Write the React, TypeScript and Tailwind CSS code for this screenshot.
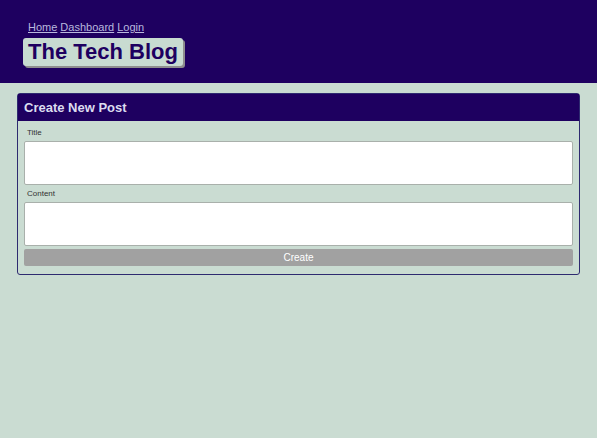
export default function App() {
  return (
    <div className="min-h-[438px] bg-[#cadcd2] font-['Liberation_Sans',Arial,sans-serif]">
      <header className="h-[83px] bg-[#1e0060] pl-[23px] pt-[20px]">
        <nav className="flex gap-[3px] pl-[5px] text-[11px] leading-[14px] text-[#b9b9de]">
          <a href="#" className="underline">Home</a>
          <a href="#" className="underline">Dashboard</a>
          <a href="#" className="underline">Login</a>
        </nav>
        <h1 className="mt-[4px] inline-block rounded-[3px] bg-[#c8dbd1] px-[5px] py-[1px] text-[22px] font-bold leading-[26px] text-[#1e0060] shadow-[2px_2px_0_#8e8e8e]">
          The Tech Blog
        </h1>
      </header>
      <main className="px-[17px] pt-[10px]">
        <section className="rounded-[3px] border border-[#2e2a70] bg-[#cadcd2]">
          <h2 className="flex h-[27px] items-center bg-[#1e0060] px-[6px] text-[13px] font-bold text-[#dcdcef]">
            Create New Post
          </h2>
          <form className="flex flex-col px-[6px] pb-[8px] pt-[6px]">
            <label className="pl-[3px] text-[8px] leading-[12px] text-[#333]">Title</label>
            <input className="mt-[2px] h-[44px] w-full rounded-[2px] border border-[#a9b0ab] bg-white" />
            <label className="mt-[3px] pl-[3px] text-[8px] leading-[12px] text-[#333]">Content</label>
            <textarea className="mt-[2px] h-[44px] w-full resize-none rounded-[2px] border border-[#a9b0ab] bg-white" />
            <button className="mt-[3px] h-[17px] rounded-[2px] bg-[#a1a1a1] text-[10px] leading-[17px] text-white">
              Create
            </button>
          </form>
        </section>
      </main>
    </div>
  );
}
